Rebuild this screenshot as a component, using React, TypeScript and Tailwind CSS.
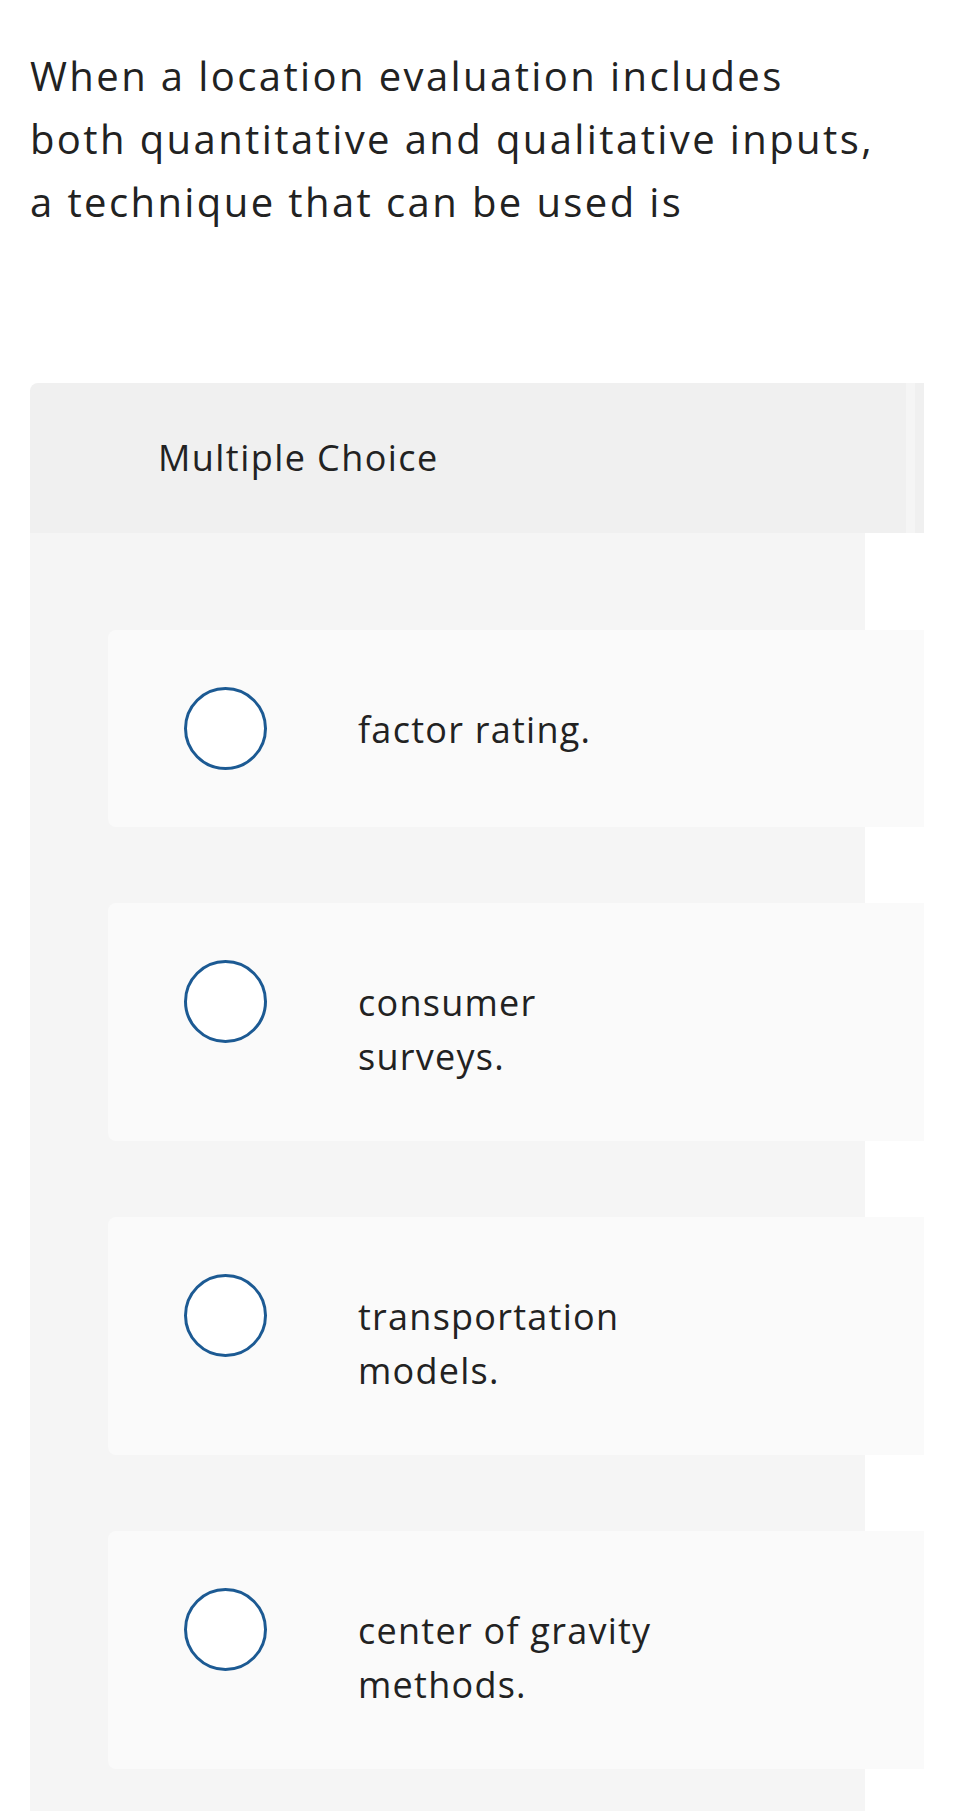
const options = [
  ['factor rating.'],
  ['consumer', 'surveys.'],
  ['transportation', 'models.'],
  ['center of gravity', 'methods.'],
]

function Radio() {
  return <span className="block w-[83px] h-[83px] shrink-0 rounded-full border-[3px] border-[#1c5a93] bg-white" />
}

export default function App() {
  return (
    <div className="min-h-[1811px] bg-white text-[#222222]" style={{ fontFamily: '"Open Sans", "Liberation Sans", sans-serif' }}>
      {/* Question */}
      <div className="pl-[30px] pr-[20px] pt-[44px] text-[40px] leading-[63px] tracking-[0.06em]">
        When a location evaluation includes
        <br />
        both quantitative and qualitative inputs,
        <br />
        a technique that can be used is
      </div>

      {/* Answer card */}
      <div className="mt-[150px] ml-[30px] w-[894px]">
        <div className="flex h-[150px] rounded-tl-[8px] bg-[#f0f0f0]">
          <div className="flex flex-1 items-center pl-[128px] text-[36px] leading-[54px] tracking-[0.04em]">Multiple Choice</div>
          <div className="w-[9px] bg-[#f5f5f5]" />
          <div className="w-[9px]" />
        </div>

        <div className="w-[835px] bg-[#f5f5f5] pl-[78px] pt-[97px] pb-[60px]">
          <div className="flex flex-col gap-[76px]">
            {options.map((lines) => (
              <div key={lines[0]} className="flex w-[816px] items-start rounded-l-[8px] bg-[#fafafa] py-[57px] pl-[76px]">
                <Radio />
                <div className="ml-[91px] mt-[16px] text-[36px] leading-[54px] tracking-[0.035em]">
                  {lines.map((l) => (
                    <div key={l}>{l}</div>
                  ))}
                </div>
              </div>
            ))}
          </div>
        </div>
      </div>
    </div>
  )
}
